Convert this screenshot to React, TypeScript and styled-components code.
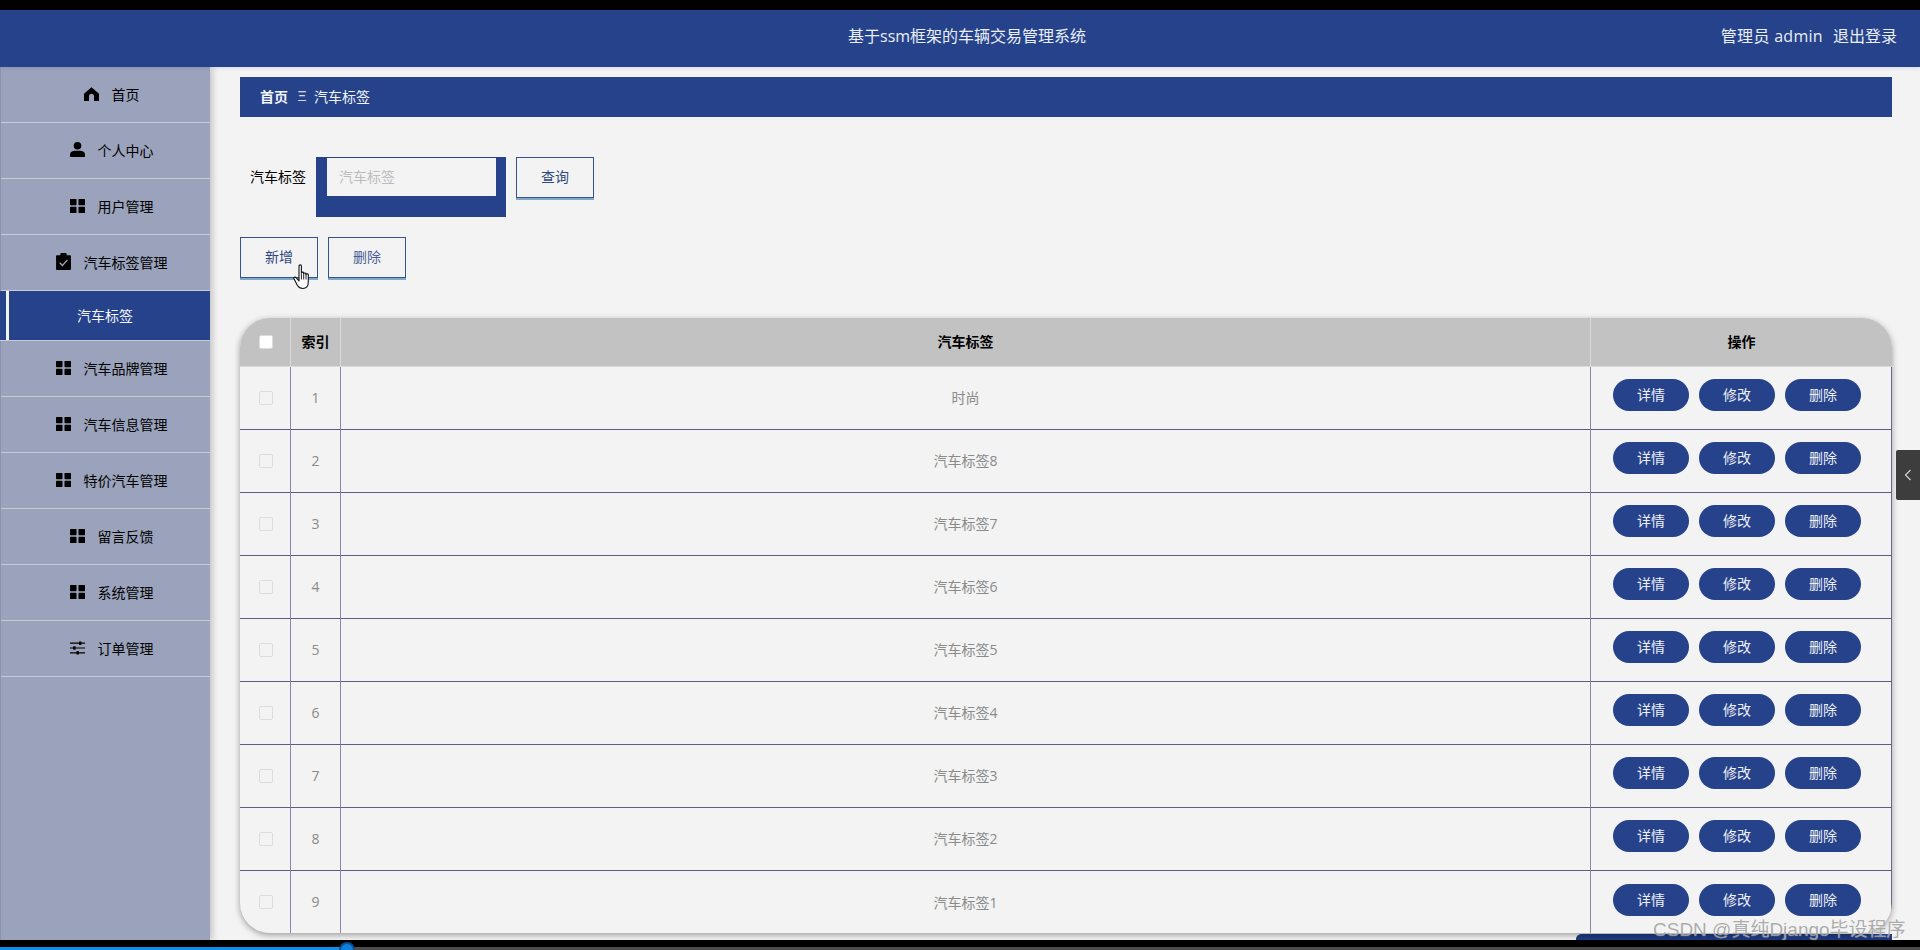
import React from "react";
import styled, { createGlobalStyle } from "styled-components";

const Global = createGlobalStyle`
  html, body { margin: 0; padding: 0; width: 100%; height: 100%; overflow: hidden; background: #000; }
  #root { width: 100%; height: 100%; }
  * { box-sizing: border-box; }
  body { font-family: "Open Sans", "Noto Sans CJK SC", sans-serif; font-size: 14px; }
`;

const BLUE = "#26428b";

const Shell = styled.div`
  width: 1920px;
  height: 950px;
  display: flex;
  flex-direction: column;
  background: #000;
  padding-top: 10px;
  position: relative;
  overflow: hidden;
`;
const Header = styled.header`
  height: 57px;
  flex: none;
  background: ${BLUE};
  color: #e9eff6;
  font-size: 16px;
  position: relative;
  z-index: 2;
  display: flex;
  align-items: center;
  justify-content: flex-end;
  padding-right: 23px;
  box-shadow: 0 1px 4px rgba(38, 66, 139, 0.15);
`;
const Title = styled.div`
  position: absolute;
  left: 848px;
  top: 0;
  line-height: 52px;
  white-space: nowrap;
`;
const UserInfo = styled.div`
  display: flex;
  gap: 10px;
  margin-top: -6px;
  line-height: 24px;
`;
const AdminName = styled.span`
  letter-spacing: 0.3px;
`;
const Body = styled.div`
  height: 873px;
  flex: none;
  display: flex;
  background: #f3f3f3;
`;
const Side = styled.aside`
  width: 210px;
  flex: none;
  background: #9aa3bb;
  box-shadow: 2px 0 7px rgba(0, 0, 0, 0.22);
  border-left: 1px solid #8a93ad;
  position: relative;
  z-index: 1;
`;
const MenuItem = styled.div`
  height: 56px;
  display: flex;
  align-items: center;
  justify-content: center;
  gap: 13px;
  padding: 0 0 2px 12px;
  color: #000;
  font-size: 14px;
  border-bottom: 1.5px solid #c6cbd8;
  svg { flex: none; }
`;
const ActiveItem = styled.div`
  height: 50px;
  margin-left: -1px;
  padding-bottom: 2px;
  background: ${BLUE};
  color: #f2f5fa;
  display: flex;
  align-items: center;
  justify-content: center;
  font-size: 14px;
  position: relative;
  border-bottom: 1px solid #c6cbd8;
  &::before {
    content: "";
    position: absolute;
    left: 6px;
    top: 0;
    bottom: 0;
    width: 3px;
    background: #f3f3f3;
  }
`;
const Main = styled.main`
  flex: 1;
  padding: 10px 28px 0 30px;
  position: relative;
  min-width: 0;
`;
const Crumb = styled.div`
  height: 40px;
  background: ${BLUE};
  color: #f2f5fa;
  display: flex;
  align-items: center;
  padding: 0 0 2px 20px;
  font-size: 14px;
`;
const CrumbHome = styled.b`
  font-weight: 700;
`;
const CrumbSep = styled.span`
  width: 10px;
  margin: 0 7px 0 9px;
  text-align: center;
  font-weight: 300;
  opacity: 0.85;
  font-family: "Liberation Sans", sans-serif;
`;
const SearchRow = styled.div`
  margin-top: 40px;
  display: flex;
  align-items: flex-start;
`;
const FieldLabel = styled.label`
  margin-left: 10px;
  width: 66px;
  line-height: 39px;
  color: #000;
`;
const FieldBox = styled.div`
  width: 190px;
  height: 60px;
  background: ${BLUE};
  padding: 1px 10px 0 11px;
`;
const FieldInput = styled.input`
  display: block;
  width: 100%;
  height: 38px;
  border: 0;
  outline: 0;
  background: #f3f3f3;
  padding: 0 12px 2px;
  font: inherit;
  &::placeholder { color: #bcbcc0; opacity: 1; }
`;
const OutlineBtn = styled.button<{ $tone?: string }>`
  width: 78px;
  height: 41px;
  padding: 0 0 4px;
  background: #f3f3f3;
  border: 1.5px solid #35528f;
  box-shadow: 0 2px 0 #7ea9c9;
  color: ${(p) => p.$tone || "#2f4a7c"};
  font: inherit;
  font-size: 14px;
`;
const SearchBtn = styled(OutlineBtn)`
  margin-left: 10px;
`;
const ActionRow = styled.div`
  margin-top: 20px;
  display: flex;
  gap: 10px;
  position: relative;
`;
const Cursor = styled.svg`
  position: absolute;
  left: 53px;
  top: 27px;
`;
const TableCard = styled.div`
  margin-top: 40px;
  height: 615px;
  border-radius: 30px;
  overflow: hidden;
  background: #f3f3f3;
  box-shadow: 0 2px 6px rgba(0, 0, 0, 0.36);
  position: relative;
  z-index: 1;
`;
const Grid = styled.table`
  width: 100%;
  border-collapse: separate;
  border-spacing: 0;
  table-layout: fixed;
`;
const Head = styled.th`
  height: 49px;
  padding: 0 0 3px;
  background: #c2c2c2;
  color: #000;
  font-size: 14px;
  font-weight: 700;
  border-right: 1.5px solid #dadada;
  border-bottom: 1px solid #dadada;
  &:first-child { padding-left: 1.5px; }
  &:last-child { border-right: 0; }
`;
const Cell = styled.td`
  height: 63px;
  padding: 0 0 2px;
  text-align: center;
  color: #8a8a8a;
  font-size: 14px;
  border-right: 1.5px solid #8b87aa;
  border-bottom: 1.5px solid #5e5b85;
  tr:last-child > & { border-bottom: 0; }
  &:first-child { padding-left: 1.5px; padding-bottom: 4px; }
  &:last-child { border-right: 1.5px solid #6a678f; }
`;
const Check = styled.span<{ $head?: boolean }>`
  display: inline-block;
  width: 14px;
  height: 14px;
  vertical-align: middle;
  border: 1px solid #dcdcdc;
  border-radius: 2px;
  background: ${(p) => (p.$head ? "#fff" : "transparent")};
`;
const Ops = styled.div`
  display: flex;
  gap: 10px;
  padding: 0 0 4px 22px;
`;
const Pill = styled.button`
  width: 76px;
  height: 32px;
  padding: 0 0 2px;
  border: 0;
  border-radius: 16px;
  background: ${BLUE};
  color: #edf1f7;
  font: inherit;
  font-size: 14px;
`;
const BottomStrip = styled.div`
  position: absolute;
  right: 28px;
  bottom: 0;
  width: 316px;
  height: 6px;
  background: #1e3a80;
  border-top-left-radius: 6px 5px;
`;
const Bottom = styled.div`
  height: 10px;
  flex: none;
  position: relative;
  background: #000;
`;
const Track = styled.div`
  position: absolute;
  left: 0;
  right: 0;
  bottom: 0;
  height: 3px;
  background: #4b4b4b;
`;
const Played = styled.div`
  position: absolute;
  left: 0;
  bottom: 0;
  width: 347px;
  height: 3px;
  background: #0f8fee;
`;
const Knob = styled.div`
  position: absolute;
  left: 339px;
  top: 2px;
  width: 16px;
  height: 16px;
  border-radius: 50%;
  background: #0f7fdc;
  border: 2px solid #0a4f92;
`;
const CollapseTab = styled.div`
  position: absolute;
  right: 0;
  top: 450px;
  width: 24px;
  height: 50px;
  background: #3d3d3d;
  border-radius: 2px 0 0 2px;
  z-index: 3;
  display: flex;
  align-items: center;
  justify-content: center;
`;
const Watermark = styled.div`
  position: absolute;
  left: 1653px;
  top: 918px;
  z-index: 4;
  font-size: 19px;
  line-height: 24px;
  white-space: nowrap;
  color: rgba(150, 150, 150, 0.8);
  text-shadow: 0 0 1px rgba(255, 255, 255, 0.7);
  font-family: "Liberation Sans", "Noto Sans CJK SC", sans-serif;
`;

const HomeIcon = () => (
  <svg width="15" height="14" viewBox="0 0 15 14">
    <path d="M7.500 .3 15 6.800V14H10V9.200a2.500 2.500 0 0 0-5 0V14H0V6.800Z" fill="#000" />
  </svg>
);
const UserIcon = () => (
  <svg width="15" height="15" viewBox="0 0 15 15">
    <circle cx="7.500" cy="3.800" r="3.800" fill="#000" />
    <path d="M0 15v-2.600C0 10 2.500 8.800 4.600 8.800h5.800C12.500 8.800 15 10 15 12.400V15Z" fill="#000" />
  </svg>
);
const GridIcon = () => (
  <svg width="15" height="14" viewBox="0 0 15 14">
    <rect x="0" y="0" width="6.500" height="6.200" rx=".6" fill="#000" />
    <rect x="8.500" y="0" width="6.500" height="6.200" rx=".6" fill="#000" />
    <rect x="0" y="7.800" width="6.500" height="6.200" rx=".6" fill="#000" />
    <rect x="8.500" y="7.800" width="6.500" height="6.200" rx=".6" fill="#000" />
  </svg>
);
const ClipIcon = () => (
  <svg width="15" height="17" viewBox="0 0 14 16">
    <path d="M1 2h3V1.200C4 .5 4.500 0 5.200 0h3.600C9.500 0 10 .5 10 1.200V2h3c.6 0 1 .4 1 1v12c0 .6-.4 1-1 1H1c-.6 0-1-.4-1-1V3c0-.6.4-1 1-1Z" fill="#000" />
    <path d="M3.500 9.200 6 11.700 10.700 6.500" fill="none" stroke="#9aa3bb" strokeWidth="1.300" />
  </svg>
);
const SliderIcon = () => (
  <svg width="15" height="14" viewBox="0 0 15 14">
    <path d="M0 2.200h15M0 7h15M0 11.800h15" stroke="#000" strokeWidth="1.200" />
    <rect x="9" y=".5" width="2.400" height="3.400" fill="#000" />
    <rect x="3.200" y="5.300" width="2.400" height="3.400" fill="#000" />
    <rect x="6.500" y="10.100" width="2.400" height="3.400" fill="#000" />
  </svg>
);

const menuTop = [
  { label: "首页", icon: <HomeIcon /> },
  { label: "个人中心", icon: <UserIcon /> },
  { label: "用户管理", icon: <GridIcon /> },
  { label: "汽车标签管理", icon: <ClipIcon /> },
];
const menuBottom = [
  { label: "汽车品牌管理", icon: <GridIcon /> },
  { label: "汽车信息管理", icon: <GridIcon /> },
  { label: "特价汽车管理", icon: <GridIcon /> },
  { label: "留言反馈", icon: <GridIcon /> },
  { label: "系统管理", icon: <GridIcon /> },
  { label: "订单管理", icon: <SliderIcon /> },
];
const rows = ["时尚", "汽车标签8", "汽车标签7", "汽车标签6", "汽车标签5", "汽车标签4", "汽车标签3", "汽车标签2", "汽车标签1"];

export default function App() {
  return (
    <Shell>
      <Global />
      <Header>
        <Title>基于ssm框架的车辆交易管理系统</Title>
        <UserInfo>
          <AdminName>管理员 admin</AdminName>
          <span>退出登录</span>
        </UserInfo>
      </Header>
      <Body>
        <Side>
          {menuTop.map((m) => (
            <MenuItem key={m.label}>
              {m.icon}
              <span>{m.label}</span>
            </MenuItem>
          ))}
          <ActiveItem>汽车标签</ActiveItem>
          {menuBottom.map((m) => (
            <MenuItem key={m.label}>
              {m.icon}
              <span>{m.label}</span>
            </MenuItem>
          ))}
        </Side>
        <Main>
          <Crumb>
            <CrumbHome>首页</CrumbHome>
            <CrumbSep>Ξ</CrumbSep>
            <span>汽车标签</span>
          </Crumb>
          <SearchRow>
            <FieldLabel>汽车标签</FieldLabel>
            <FieldBox>
              <FieldInput placeholder="汽车标签" />
            </FieldBox>
            <SearchBtn>查询</SearchBtn>
          </SearchRow>
          <ActionRow>
            <OutlineBtn $tone="#33477e">新增</OutlineBtn>
            <OutlineBtn $tone="#4a5f95">删除</OutlineBtn>
            <Cursor width="20" height="26" viewBox="0 0 20 26">
              <path
                d="M6 1.800c0-1.300 2.400-1.300 2.400 0V9c0-1.200 2.300-1.200 2.300 0v.8c0-1.100 2.300-1.100 2.300 0v.8c0-1 2.300-1 2.300 0V18c0 3.500-1.800 6.500-5.500 6.500-3 0-4.300-1.300-5.500-3.300L1 14.800c-.8-1.200 1-2.400 2-1.200L6 17Z"
                fill="#fff"
                stroke="#111"
                strokeWidth="1.100"
                strokeLinejoin="round"
              />
              <path d="M8.400 9.500v6M10.700 9.800v5.700M13 10.500v5" stroke="#111" strokeWidth=".9" />
            </Cursor>
          </ActionRow>
          <TableCard>
            <Grid>
              <colgroup>
                <col width="51" />
                <col width="50" />
                <col />
                <col width="301" />
              </colgroup>
              <thead>
                <tr>
                  <Head><Check $head /></Head>
                  <Head>索引</Head>
                  <Head>汽车标签</Head>
                  <Head>操作</Head>
                </tr>
              </thead>
              <tbody>
                {rows.map((r, i) => (
                  <tr key={r}>
                    <Cell><Check /></Cell>
                    <Cell>{i + 1}</Cell>
                    <Cell>{r}</Cell>
                    <Cell>
                      <Ops>
                        <Pill>详情</Pill>
                        <Pill>修改</Pill>
                        <Pill>删除</Pill>
                      </Ops>
                    </Cell>
                  </tr>
                ))}
              </tbody>
            </Grid>
          </TableCard>
          <BottomStrip />
        </Main>
      </Body>
      <Bottom>
        <Track />
        <Played />
        <Knob />
      </Bottom>
      <CollapseTab>
        <svg width="8" height="14" viewBox="0 0 8 14">
          <path d="M6.500 2 1.500 7l5 5" fill="none" stroke="#d8d8d8" strokeWidth="1.100" />
        </svg>
      </CollapseTab>
      <Watermark>CSDN @真纯Django毕设程序</Watermark>
    </Shell>
  );
}
